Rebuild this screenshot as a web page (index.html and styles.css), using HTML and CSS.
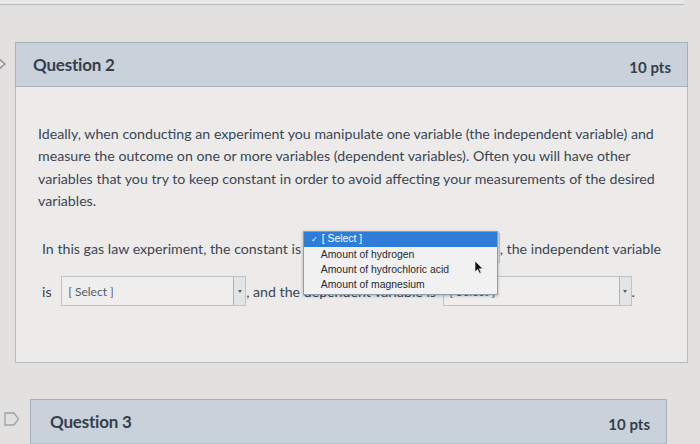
FILE: index.html
```html
<!DOCTYPE html>
<html>
<head>
<meta charset="utf-8">
<link rel="stylesheet" href="styles.css">
</head>
<body>
<div class="prev"></div>

<div class="qrow q2row">
  <div class="qicon">
    <svg width="8" height="14" viewBox="0 0 8 14"><path d="M-2 1 L5 7 L-2 13" fill="none" stroke="#8d949c" stroke-width="1.4"/></svg>
  </div>
  <div class="card">
    <div class="card-head">
      <span class="q-title">Question 2</span>
      <span class="q-pts">10 pts</span>
    </div>
    <div class="card-body">
      <p class="intro">Ideally, when conducting an experiment you manipulate one variable (the independent variable) and measure the outcome on one or more variables (dependent variables). Often you will have other variables that you try to keep constant in order to avoid affecting your measurements of the desired variables.</p>
      <p class="blanks">In this gas law experiment, the constant is <span class="sel sel-open"><span class="sel-btn"><span class="tri"></span></span><span class="list"><span class="opt opt-on"><span class="chk">✓</span>[ Select ]</span><span class="opt">Amount of hydrogen</span><span class="opt">Amount of hydrochloric acid</span><span class="opt">Amount of magnesium</span><svg class="cursor" width="10" height="14" viewBox="0 0 10 14"><path d="M1 1 L1 12 L3.6 9.4 L5.6 13.4 L7.2 12.6 L5.3 8.8 L8.8 8.8 Z" fill="#111" stroke="#fff" stroke-width="0.6"/></svg></span></span>, the independent variable<br>is <span class="sel sel-a"><span class="sel-text">[ Select ]</span><span class="sel-btn"><span class="tri"></span></span></span>, and the dependent variable is <span class="sel sel-b"><span class="sel-text">[ Select ]</span><span class="sel-btn"><span class="tri"></span></span></span>.</p>
    </div>
  </div>
</div>

<div class="qrow q3row">
  <div class="qicon q3icon">
    <svg width="16" height="14" viewBox="0 0 16 14"><path d="M1 1 H10 L14.5 7 L10 13 H1 Z" fill="none" stroke="#9aa1a9" stroke-width="1.3"/></svg>
  </div>
  <div class="card">
    <div class="card-head head3">
      <span class="q-title">Question 3</span>
      <span class="q-pts">10 pts</span>
    </div>
  </div>
</div>
</body>
</html>
```

FILE: styles.css
```css
html, body {
  margin: 0;
  padding: 0;
}
body {
  width: 700px;
  height: 444px;
  overflow: hidden;
  background: #e2e1df;
  font-family: Lato, "Liberation Sans", sans-serif;
  color: #3b4654;
}
.prev {
  height: 4px;
  margin-right: 16px;
  background: #e9e8e6;
  border-bottom: 1px solid #b3b9c0;
}
.qrow {
  display: flex;
  align-items: flex-start;
}
.q2row {
  margin: 37px 12px 0 0;
}
.qicon {
  width: 15px;
  flex: none;
  display: flex;
  align-items: center;
  height: 44px;
}
.card {
  flex: 1;
}
.card-head {
  height: 43px;
  background: #c9d1da;
  border: 1px solid #a8b0ba;
  display: flex;
  align-items: center;
  justify-content: space-between;
  padding: 0 16px 0 17px;
}
.q-title {
  font-size: 17px;
  font-weight: 700;
  color: #34404e;
  letter-spacing: -0.2px;
}
.q-pts {
  font-size: 15px;
  font-weight: 700;
  color: #34404e;
  padding-top: 5px;
}
.card-body {
  height: 239px;
  background: #ecebe9;
  border: 1px solid #b2bac3;
  border-top: none;
  padding: 36px 20px 0 22px;
}
.intro {
  margin: 0;
  font-size: 14.2px;
  line-height: 22.4px;
  color: #3b4654;
}
.blanks {
  margin: 14px 4px 0 4px;
  font-size: 14.2px;
  line-height: 43px;
  color: #3b4654;
}
.sel {
  display: inline-block;
  position: relative;
  height: 30px;
  vertical-align: middle;
  margin-top: -4px;
  box-sizing: border-box;
  border: 1px solid #bcc3cc;
  background: #efeeec;
  line-height: 28px;
  text-align: left;
}
.sel-open {
  width: 194px;
  margin-left: 1px;
}
.sel-a {
  width: 185px;
  margin-left: 6px;
}
.sel-b {
  width: 189px;
  margin-left: 3px;
}
.sel-text {
  font-size: 12px;
  color: #4f5a66;
  padding-left: 6px;
}
.sel-btn {
  position: absolute;
  right: 0;
  top: 0;
  bottom: 0;
  width: 11px;
  border-left: 1px solid #aab2bc;
  background: #e3e4e6;
  display: flex;
  align-items: center;
  justify-content: center;
}
.tri {
  width: 0;
  height: 0;
  border-left: 2.5px solid transparent;
  border-right: 2.5px solid transparent;
  border-top: 3px solid #555d66;
}
.list {
  position: absolute;
  left: -4px;
  top: -3px;
  width: 195px;
  height: 64px;
  box-sizing: border-box;
  background: #f1f1f2;
  border: 1px solid #8e9cb0;
  box-shadow: 0 1px 3px rgba(0,0,0,0.25);
  display: flex;
  flex-direction: column;
  font-family: "Liberation Sans", Arial, sans-serif;
  z-index: 2;
}
.opt {
  display: block;
  height: 15px;
  line-height: 15px;
  font-size: 10.4px;
  color: #252a30;
  padding-left: 17px;
  white-space: nowrap;
}
.opt-on {
  background: #2f7cd9;
  color: #fff;
  padding-left: 7px;
  height: 15px;
  line-height: 14px;
}
.chk {
  font-size: 8px;
  margin-right: 4px;
}
.cursor {
  position: absolute;
  left: 170px;
  top: 28px;
}
.q3row {
  margin: 36px 33px 0 0;
}
.q3icon {
  width: 30px;
  justify-content: flex-start;
  padding-left: 4px;
  box-sizing: border-box;
  height: 40px;
}
.head3 {
  padding: 0 16px 0 19px;
  border-bottom: 1px solid #b7c2cd;
}
```
